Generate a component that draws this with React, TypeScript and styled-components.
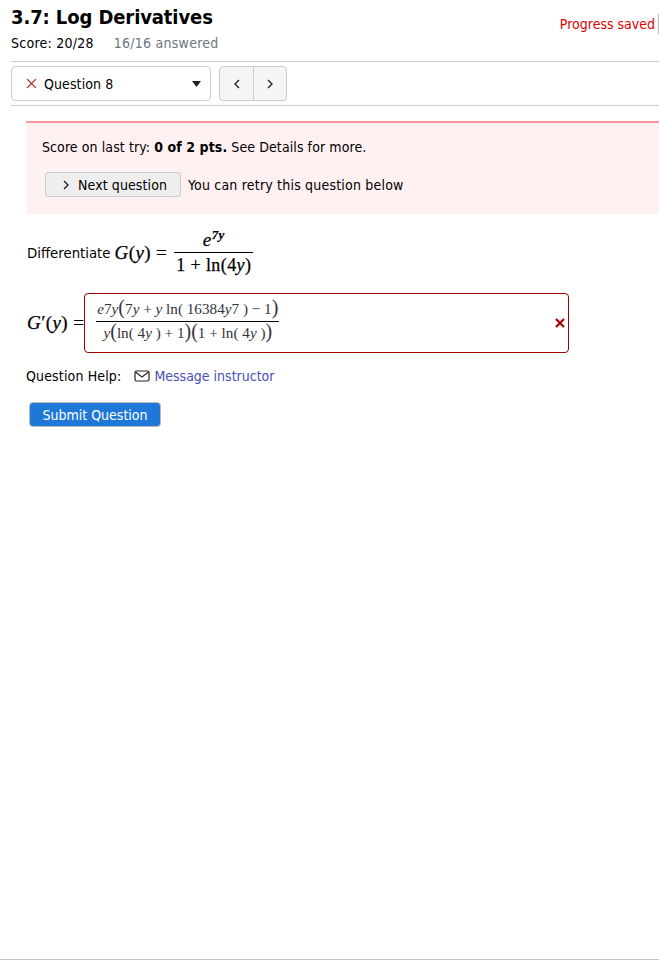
import React from 'react';
import styled, { createGlobalStyle } from 'styled-components';

const GlobalStyle = createGlobalStyle`
  html, body {
    margin: 0;
    padding: 0;
    background: #fff;
  }
  body {
    font-family: "DejaVu Sans Condensed", "DejaVu Sans", Tahoma, sans-serif;
    font-stretch: condensed;
    font-size: 14px;
    color: #000;
  }
`;

const Page = styled.div`
  width: 659px;
  height: 960px;
  box-sizing: border-box;
  overflow: hidden;
  display: flex;
  flex-direction: column;
  border-bottom: 1px solid #c4c4c4;
  padding-bottom: 1px;
`;

const Header = styled.header`
  display: flex;
  justify-content: space-between;
  margin-left: 11px;
  height: 61px;
  border-bottom: 1px solid #ccc;
`;

const Title = styled.h1`
  margin: 4px 0 0;
  font-size: 20px;
  line-height: 27px;
  font-weight: 700;
  letter-spacing: -0.1px;
`;

const ScoreLine = styled.div`
  display: flex;
  gap: 20px;
  margin-top: 3px;
  line-height: 18px;
  letter-spacing: 0.25px;
`;

const Answered = styled.span`
  color: #6c757d;
`;

const Saved = styled.div`
  height: 20px;
  margin-top: 14px;
  padding-right: 3px;
  border-right: 1px solid #bbb;
  color: #e00000;
  line-height: 21px;
`;

const NavBar = styled.nav`
  display: flex;
  gap: 8px;
  align-items: center;
  margin-left: 11px;
  height: 43px;
  border-bottom: 1px solid #ccc;
`;

const Select = styled.div`
  width: 200px;
  height: 35px;
  box-sizing: border-box;
  display: flex;
  align-items: center;
  gap: 7px;
  padding: 0 9px 0 14px;
  background: #fff;
  border: 1px solid #ccc;
  border-radius: 4px;
  letter-spacing: 0.1px;
`;

const SelectLabel = styled.span`
  flex: 1;
`;

const Pager = styled.div`
  display: flex;
  height: 35px;
  box-sizing: border-box;
  background: #f5f5f5;
  border: 1px solid #ccc;
  border-radius: 4px;
`;

const PageButton = styled.button<{ $divider?: boolean }>`
  width: 33px;
  padding: 0;
  display: flex;
  align-items: center;
  justify-content: center;
  background: none;
  border: 0;
  border-left: ${({ $divider }) => ($divider ? '1px solid #ccc' : '0')};
`;

const Banner = styled.section`
  margin: 15px 0 0 26px;
  height: 93px;
  box-sizing: border-box;
  background: #fff1f1;
  border-top: 2px solid #f99;
  padding: 14px 0 0 16px;
`;

const ScoreText = styled.div`
  line-height: 20px;
  letter-spacing: 0.09px;
`;

const BannerRow = styled.div`
  display: flex;
  align-items: center;
  gap: 7px;
  margin: 15px 0 0 3px;
  letter-spacing: 0.2px;
`;

const NextButton = styled.button`
  width: 136px;
  height: 25px;
  box-sizing: border-box;
  display: flex;
  align-items: center;
  gap: 8px;
  padding: 0 0 0 16px;
  background: #eee;
  border: 1px solid #ccc;
  border-radius: 3px;
  color: #000;
  font: inherit;
  letter-spacing: 0.1px;
`;

const Content = styled.main`
  margin-left: 27px;
`;

const Prompt = styled.div`
  display: flex;
  align-items: center;
  gap: 4px;
  margin-top: 14px;
  height: 50px;
  font-family: "DejaVu Sans", Tahoma, sans-serif;
  font-stretch: normal;
  font-size: 13.3px;
`;

const MathText = styled.span`
  font-family: "Liberation Serif", "Times New Roman", serif;
  font-size: 19px;
  letter-spacing: 0.4px;
  white-space: nowrap;
  color: #000;
  -webkit-text-stroke: 0.25px #000;
`;

const Var = styled.i`
  font-style: italic;
`;

const Fraction = styled.span`
  display: inline-flex;
  flex-direction: column;
  align-items: center;
  margin-left: 3px;
`;

const Numerator = styled.span`
  padding: 0 2px 2px;
  border-bottom: 1px solid #000;
  line-height: 21px;
  width: 100%;
  box-sizing: border-box;
  text-align: center;
`;

const Denominator = styled.span`
  padding: 1px 2px 0;
  line-height: 23px;
  font-size: 18px;
`;

const Sup = styled.sup`
  font-size: 13px;
  font-weight: 700;
  font-style: italic;
  line-height: 0;
`;

const AnswerRow = styled.div`
  display: flex;
  align-items: center;
  margin-top: 15px;
`;

const AnswerBox = styled.div`
  position: relative;
  width: 485px;
  height: 60px;
  box-sizing: border-box;
  display: flex;
  align-items: center;
  padding: 0 0 4px 11px;
  background: #fff;
  border: 1px solid #a00000;
  border-radius: 4px;
`;

const AnswerMath = styled(MathText)`
  font-size: 15.2px;
  letter-spacing: 0;
  color: #33333a;
  -webkit-text-stroke: 0;
  display: inline-flex;
  flex-direction: column;
  align-items: center;
`;

const AnswerTop = styled.span`
  border-bottom: 1px solid #000;
  padding: 0 1px 1px;
  line-height: 22px;
`;

const AnswerBottom = styled.span`
  line-height: 22px;
`;

const Paren = styled.span`
  font-size: 20px;
  font-weight: 400;
  line-height: 0;
`;

const WrongMark = styled.span`
  position: absolute;
  right: 3px;
  top: 24px;
  display: flex;
`;

const Help = styled.div`
  display: flex;
  align-items: center;
  margin-top: 13px;
  height: 20px;
  margin-left: -1px;
`;

const HelpLabel = styled.span`
  margin-right: 13px;
  letter-spacing: 0.15px;
`;

const HelpLink = styled.a`
  margin-left: 4px;
  color: #4a4fb5;
  text-decoration: none;
`;

const SubmitButton = styled.button`
  display: block;
  width: 132px;
  height: 25px;
  margin: 16px 0 0 2px;
  padding: 0;
  background: #1f78d8;
  border: 1px solid #bbb;
  border-radius: 4px;
  color: #fff;
  font: inherit;
`;

const Chevron = ({ dir }: { dir: 'left' | 'right' }) => (
  <svg width="8" height="10" viewBox="0 0 8 10" fill="none" stroke="#222" strokeWidth="1.4">
    <path d={dir === 'left' ? 'M6 1 2 5l4 4' : 'M2 1l4 4-4 4'} />
  </svg>
);

const Cross = ({ size, color, width }: { size: number; color: string; width: number }) => (
  <svg width={size} height={size} viewBox="0 0 10 10" fill="none" stroke={color} strokeWidth={width}>
    <path d="M1 1l8 8M9 1 1 9" />
  </svg>
);

const App: React.FC = () => (
  <>
    <GlobalStyle />
    <Page>
      <Header>
        <div>
          <Title>3.7: Log Derivatives</Title>
          <ScoreLine>
            <span>Score: 20/28</span>
            <Answered>16/16 answered</Answered>
          </ScoreLine>
        </div>
        <Saved>Progress saved</Saved>
      </Header>

      <NavBar>
        <Select>
          <Cross size={11} color="#b02a2a" width={1.2} />
          <SelectLabel>Question 8</SelectLabel>
          <svg width="9" height="6" viewBox="0 0 9 6">
            <path d="M0 0h9L4.5 6z" fill="#222" />
          </svg>
        </Select>
        <Pager>
          <PageButton aria-label="Previous">
            <Chevron dir="left" />
          </PageButton>
          <PageButton $divider aria-label="Next">
            <Chevron dir="right" />
          </PageButton>
        </Pager>
      </NavBar>

      <Banner>
        <ScoreText>
          Score on last try: <b>0 of 2 pts.</b> See Details for more.
        </ScoreText>
        <BannerRow>
          <NextButton>
            <Chevron dir="right" />
            Next question
          </NextButton>
          <span>You can retry this question below</span>
        </BannerRow>
      </Banner>

      <Content>
        <Prompt>
          <span>Differentiate</span>
          <MathText>
            <Var>G</Var>(<Var>y</Var>) =
          </MathText>
          <MathText>
            <Fraction>
              <Numerator>
                <Var>e</Var>
                <Sup>7y</Sup>
              </Numerator>
              <Denominator>
                1 + ln(4<Var>y</Var>)
              </Denominator>
            </Fraction>
          </MathText>
        </Prompt>

        <AnswerRow>
          <MathText>
            <Var>G</Var>′(<Var>y</Var>) =
          </MathText>
          <AnswerBox>
            <AnswerMath>
              <AnswerTop>
                <Var>e</Var>7<Var>y</Var>
                <Paren>(</Paren>7<Var>y</Var> + <Var>y</Var> ln( 16384<Var>y</Var>7 ) − 1<Paren>)</Paren>
              </AnswerTop>
              <AnswerBottom>
                <Var>y</Var>
                <Paren>(</Paren>ln( 4<Var>y</Var> ) + 1<Paren>)</Paren>
                <Paren>(</Paren>1 + ln( 4<Var>y</Var> )<Paren>)</Paren>
              </AnswerBottom>
            </AnswerMath>
            <WrongMark>
              <Cross size={10} color="#a00000" width={2.2} />
            </WrongMark>
          </AnswerBox>
        </AnswerRow>

        <Help>
          <HelpLabel>Question Help:</HelpLabel>
          <svg width="16" height="12" viewBox="0 0 16 12" fill="none" stroke="#222" strokeWidth="1.2">
            <rect x="1" y="1" width="14" height="10" rx="1.5" />
            <path d="M1.5 2 8 7l6.5-5" />
          </svg>
          <HelpLink href="#">Message instructor</HelpLink>
        </Help>

        <SubmitButton>Submit Question</SubmitButton>
      </Content>
    </Page>
  </>
);

export default App;
